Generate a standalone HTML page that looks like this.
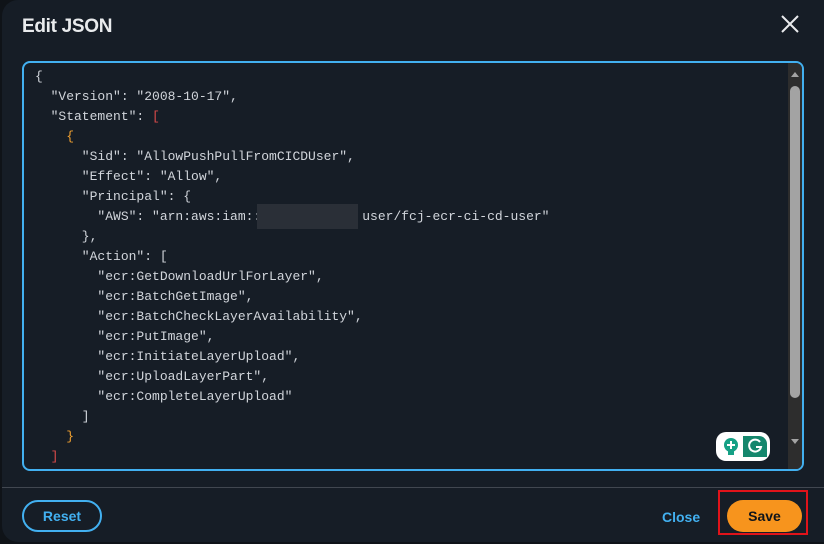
<!DOCTYPE html>
<html><head><style>
body{margin:0;width:824px;height:544px;background:#0f1318;overflow:hidden;font-family:"Liberation Sans",sans-serif;position:relative}
.modal{position:absolute;left:2px;top:0;width:840px;height:542px;background:#161d26;border-radius:16px}
h1{position:absolute;left:22px;top:16px;margin:0;font-size:19px;font-weight:bold;color:#e9ebed;letter-spacing:-0.3px}
.x{position:absolute;left:780px;top:14px}
.ta{position:absolute;left:22px;top:61px;width:778px;height:406px;border:2px solid #42b0f0;border-radius:8px;background:#161d26;overflow:hidden}
pre{margin:0;position:absolute;left:11px;top:4px;font-family:"Liberation Mono",monospace;font-size:13px;line-height:20px;color:#d1d5db}
.r{color:#d94a4a}.o{color:#f0a030}
.red{display:inline-block;width:101px;height:1px;position:relative}
.red::before{content:"";position:absolute;left:-4px;top:-15px;width:101px;height:25px;background:#2a2f37}
.sb{position:absolute;right:0;top:0;width:14px;height:406px;background:#2d2d2d}
.th{position:absolute;left:2px;top:23px;width:10px;height:312px;background:#a3a3a3;border-radius:5px}
.gr{position:absolute;left:692px;top:369px;width:54px;height:29px;background:#fff;border-radius:10px}
.div{position:absolute;left:2px;top:487px;width:822px;height:1px;background:#414750}
.reset{position:absolute;left:22px;top:500px;width:76px;height:28px;border:2px solid #42b0f0;border-radius:16px;color:#42b0f0;font-weight:bold;font-size:14px;text-align:center;line-height:28px}
.close{position:absolute;left:662px;top:509px;color:#42b0f0;font-weight:bold;font-size:14px}
.save{position:absolute;left:727px;top:500px;width:75px;height:32px;background:#f7941d;border-radius:16px;color:#0f141a;font-weight:bold;font-size:14px;text-align:center;line-height:32px}
.hl{position:absolute;left:718px;top:490px;width:86px;height:41px;border:2px solid #e0131a}
</style></head><body>
<div class="modal"></div>
<h1>Edit JSON</h1>
<svg class="x" width="20" height="20" viewBox="0 0 20 20"><path d="M2 2L18 18M18 2L2 18" stroke="#e9ebed" stroke-width="2"/></svg>
<div class="ta">
<pre>{
  "Version": "2008-10-17",
  "Statement": <span class="r">[</span>
    <span class="o">{</span>
      "Sid": "AllowPushPullFromCICDUser",
      "Effect": "Allow",
      "Principal": {
        "AWS": "arn:aws:iam::<span class="red"></span>user/fcj-ecr-ci-cd-user"
      },
      "Action": [
        "ecr:GetDownloadUrlForLayer",
        "ecr:BatchGetImage",
        "ecr:BatchCheckLayerAvailability",
        "ecr:PutImage",
        "ecr:InitiateLayerUpload",
        "ecr:UploadLayerPart",
        "ecr:CompleteLayerUpload"
      ]
    <span class="o">}</span>
  <span class="r">]</span></pre>
<div class="sb"><svg width="14" height="14" style="position:absolute;top:4px"><path d="M3 10L7 5L11 10Z" fill="#a3a3a3"/></svg><div class="th"></div><svg width="14" height="14" style="position:absolute;top:372px"><path d="M3 4L7 9L11 4Z" fill="#a3a3a3"/></svg></div>
<div class="gr"><svg width="54" height="29"><circle cx="15" cy="13" r="7" fill="#15a085"/><rect x="12" y="19" width="6" height="4" fill="#15a085"/><path d="M15 9v8M11 13h8" stroke="#fff" stroke-width="2"/><path d="M27 4h16a8 8 0 0 1 8 8v13H27z" fill="#15876d"/><path d="M44 10a6 6 0 1 0 1 5h-5" stroke="#fff" stroke-width="2" fill="none"/></svg></div>
</div>
<div class="div"></div>
<div class="reset">Reset</div>
<div class="close">Close</div>
<div class="save">Save</div>
<div class="hl"></div>
</body></html>
